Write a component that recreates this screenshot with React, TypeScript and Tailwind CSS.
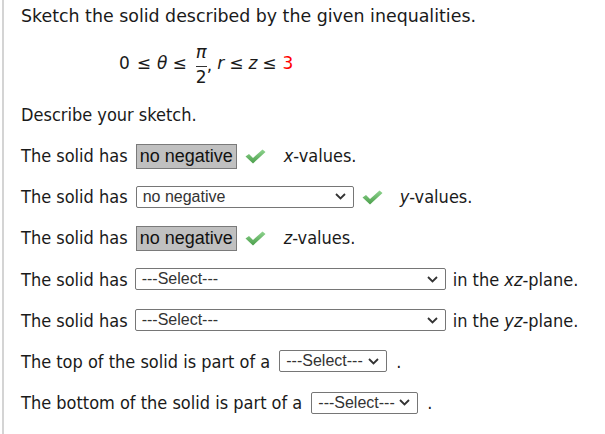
import type { ReactNode } from 'react';

function Check() {
  return (
    <svg width="21" height="16" viewBox="0 0 21 16" className="shrink-0">
      <defs>
        <linearGradient id="chk" x1="0" y1="0" x2="0" y2="1">
          <stop offset="0" stopColor="#8fd48f" />
          <stop offset="1" stopColor="#4a9e4a" />
        </linearGradient>
      </defs>
      <path d="M0.5 8.5 L4 6 L8 10 L17.5 1.5 L20.5 4 L8 15.5 Z" fill="url(#chk)" />
    </svg>
  );
}

function FakeSelect({ width, label }: { width: number; label: string }) {
  return (
    <div
      className="flex items-center justify-between h-[22px] border border-[#767676] rounded-[2px] bg-white pl-[6px] pr-[7px] text-[16px] text-[#333] font-['Liberation_Sans',Arial,sans-serif]"
      style={{ width }}
    >
      <span className="leading-none">{label}</span>
      <svg width="11" height="7" viewBox="0 0 11 7" className="shrink-0">
        <path d="M1 1 L5.5 5.5 L10 1" fill="none" stroke="#333" strokeWidth="1.8" />
      </svg>
    </div>
  );
}

function Answer({ children }: { children: ReactNode }) {
  return (
    <span className="inline-flex items-center h-[25px] px-[3px] border border-[#7a7a7a] bg-[#c0c0c0] text-[18px] text-[#111] font-['Liberation_Sans',Arial,sans-serif] leading-none">
      {children}
    </span>
  );
}

function Row({ children }: { children: ReactNode }) {
  return <div className="flex items-center h-[25px] whitespace-nowrap">{children}</div>;
}

export default function App() {
  return (
    <div className="min-h-screen bg-white ml-[2px] border-l-2 border-[#d4d4d4] pl-[17px] text-[18px] text-[#1a1a1a] font-['DejaVu_Sans_Condensed','DejaVu_Sans',sans-serif]">
      <p className="pt-[5px] leading-[22px] text-[17.4px] font-['DejaVu_Sans',Verdana,sans-serif]">
        Sketch the solid described by the given inequalities.
      </p>

      {/* inequalities */}
      <div className="flex items-center h-[40px] mt-[17px] pl-[98px] text-[17px] font-['DejaVu_Sans',Verdana,sans-serif]">
        <span>0</span>
        <span className="ml-[7px]">≤</span>
        <span className="ml-[6px] italic">θ</span>
        <span className="ml-[5px]">≤</span>
        <span className="inline-flex flex-col items-center ml-[9px]">
          <span className="italic text-[18px] leading-[14px]">π</span>
          <span className="w-[11px] h-px bg-[#333] mt-[7px] mb-[3px]" />
          <span className="leading-[14px]">2</span>
        </span>
        <span className="mt-[4px]">,</span>
        <span className="ml-[5px] italic">r</span>
        <span className="ml-[5px]">≤</span>
        <span className="ml-[5px] italic">z</span>
        <span className="ml-[5px]">≤</span>
        <span className="ml-[6px] text-[#ff0000]">3</span>
      </div>

      <p className="mt-[20px] leading-[22px]">Describe your sketch.</p>

      <div className="flex flex-col gap-[16.2px] mt-[17px]">
        <Row>
          <span>The solid has</span>
          <span className="ml-[8px]"><Answer>no negative</Answer></span>
          <span className="ml-[8px]"><Check /></span>
          <span className="ml-[18px]"><i>x</i>-values.</span>
        </Row>
        <Row>
          <span>The solid has</span>
          <span className="ml-[8px]"><FakeSelect width={218} label="no negative" /></span>
          <span className="ml-[8px]"><Check /></span>
          <span className="ml-[17px]"><i>y</i>-values.</span>
        </Row>
        <Row>
          <span>The solid has</span>
          <span className="ml-[8px]"><Answer>no negative</Answer></span>
          <span className="ml-[8px]"><Check /></span>
          <span className="ml-[18px]"><i>z</i>-values.</span>
        </Row>
        <Row>
          <span>The solid has</span>
          <span className="ml-[7px]"><FakeSelect width={311} label="---Select---" /></span>
          <span className="ml-[7px]">in the <i>xz</i>-plane.</span>
        </Row>
        <Row>
          <span>The solid has</span>
          <span className="ml-[7px]"><FakeSelect width={311} label="---Select---" /></span>
          <span className="ml-[7px]">in the <i>yz</i>-plane.</span>
        </Row>
        <Row>
          <span>The top of the solid is part of a</span>
          <span className="ml-[9px]"><FakeSelect width={108} label="---Select---" /></span>
          <span className="ml-[9px]">.</span>
        </Row>
        <Row>
          <span>The bottom of the solid is part of a</span>
          <span className="ml-[9px]"><FakeSelect width={107} label="---Select---" /></span>
          <span className="ml-[9px]">.</span>
        </Row>
      </div>
    </div>
  );
}
